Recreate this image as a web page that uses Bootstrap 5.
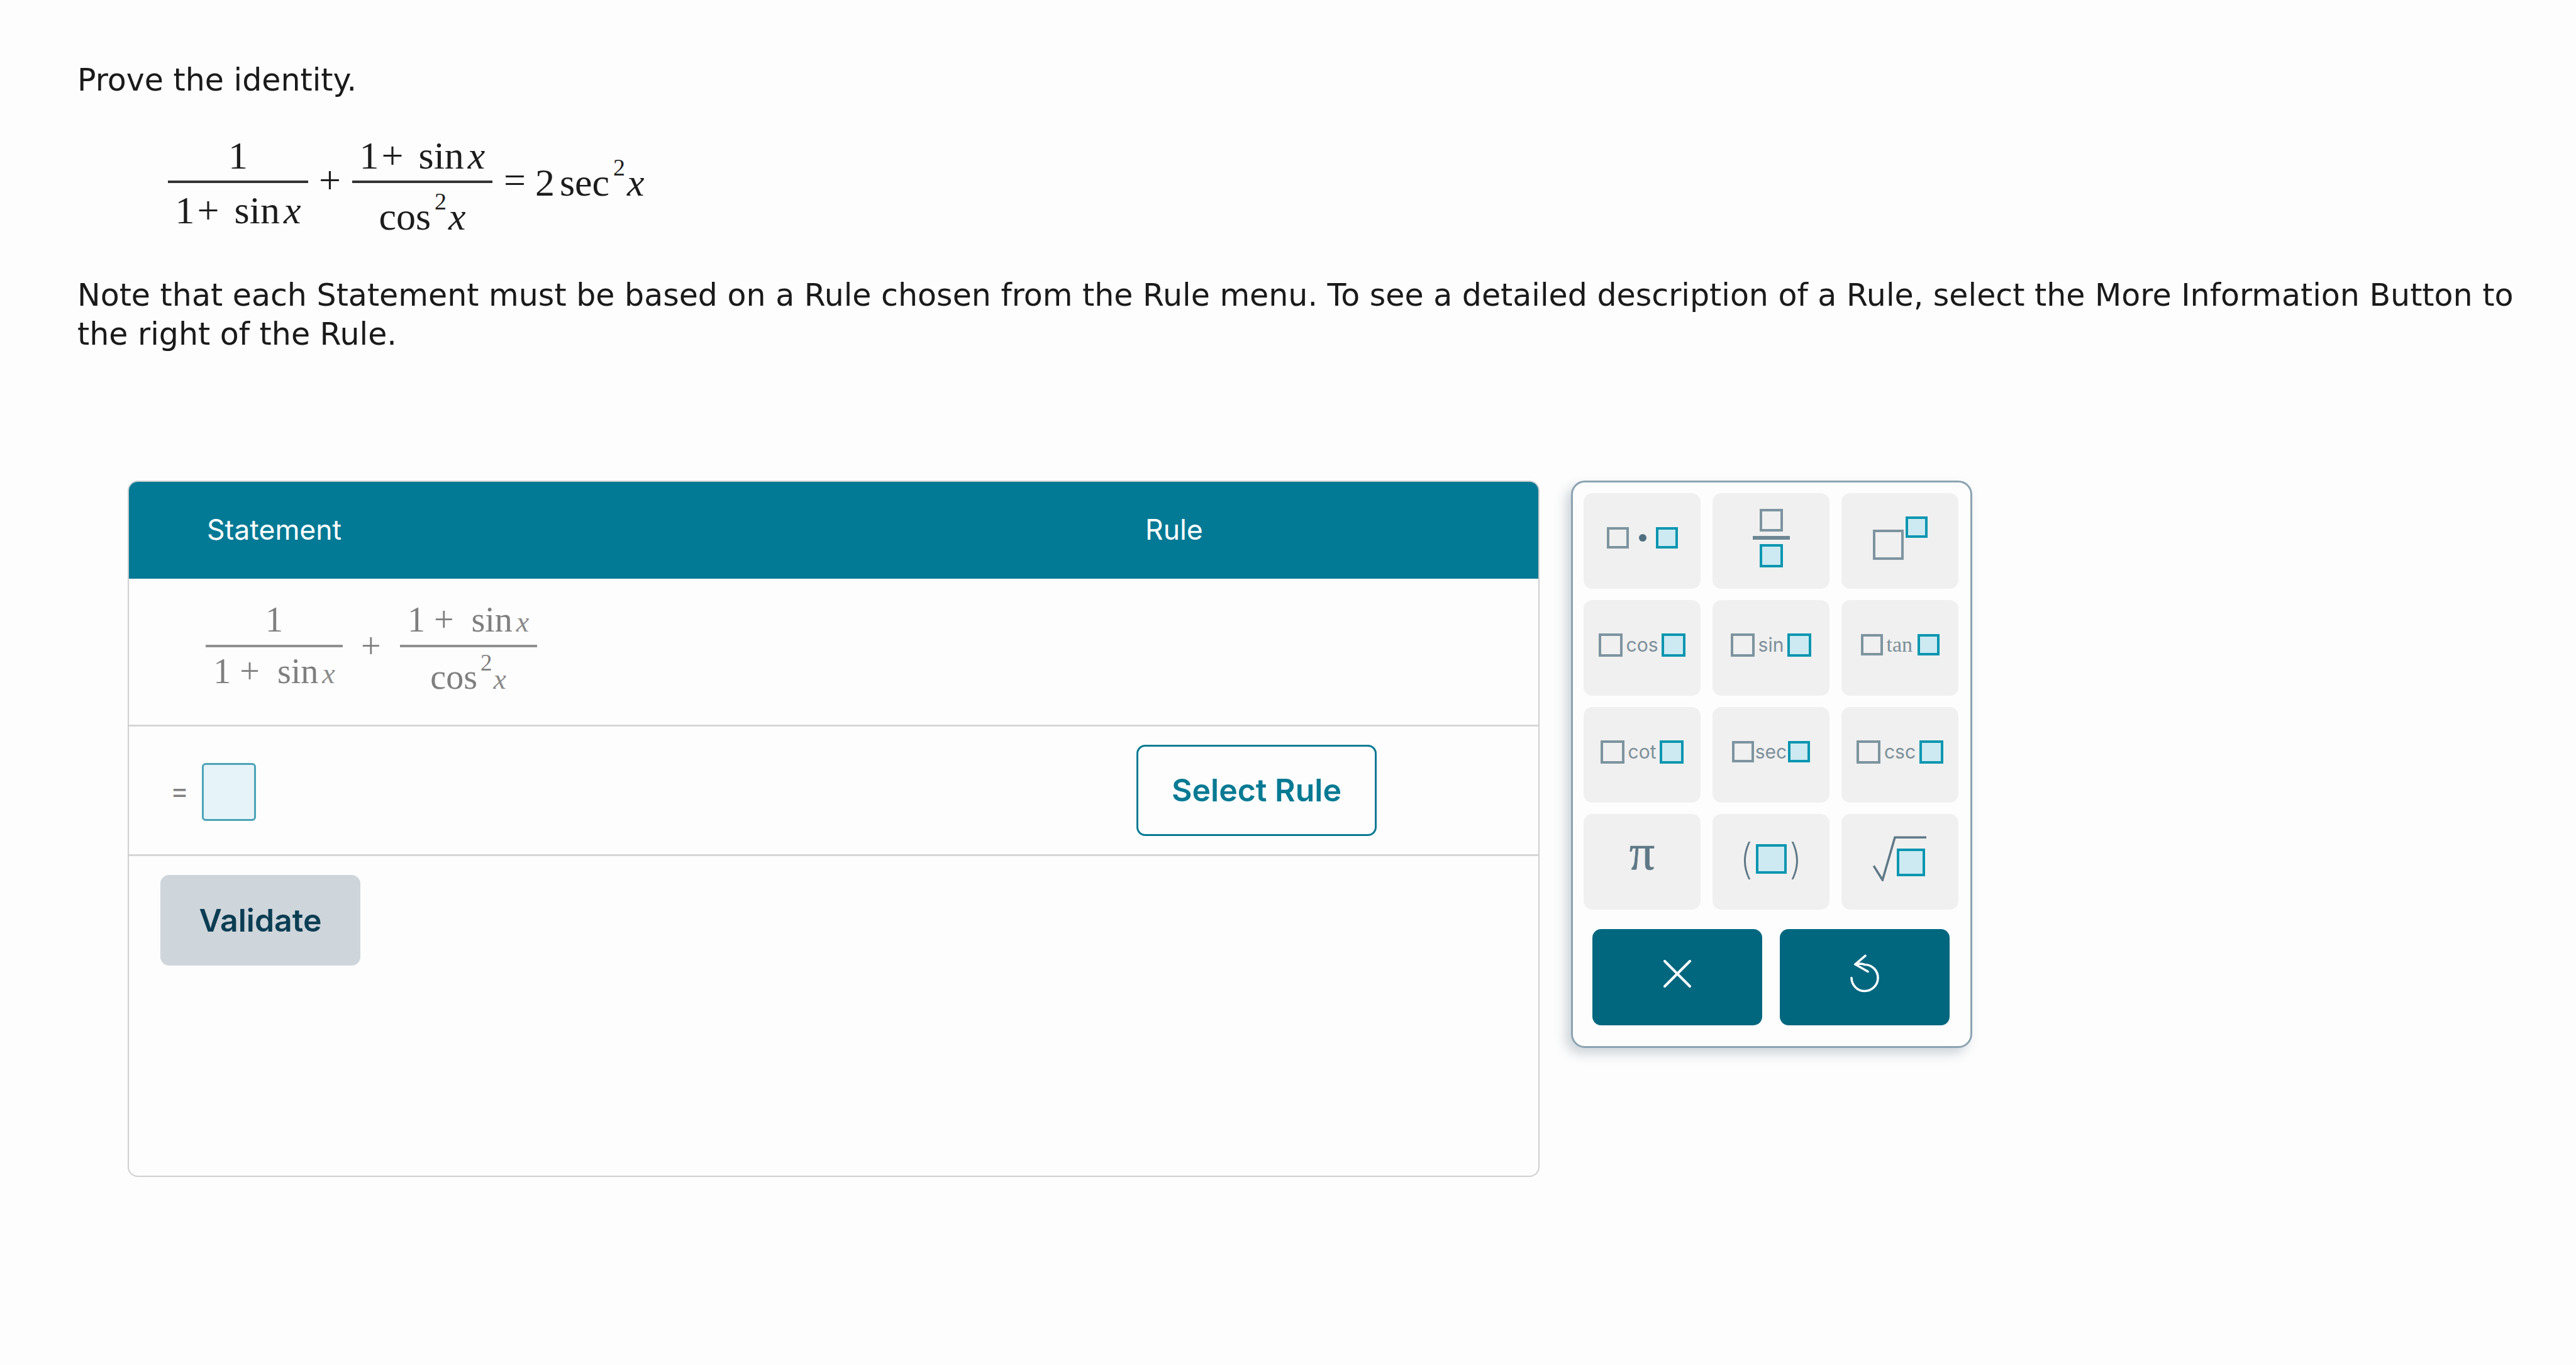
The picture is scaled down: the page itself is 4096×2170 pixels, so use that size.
<!DOCTYPE html>
<html lang="en">
<head>
<meta charset="utf-8">
<title>Prove the identity</title>
<link href="https://cdn.jsdelivr.net/npm/bootstrap@5.3.0/dist/css/bootstrap.min.css" rel="stylesheet">
<style>
html,body{background:#fdfdfd;margin:0;height:100%}
body{font-family:"Inter","Liberation Sans",sans-serif;color:#212121;overflow:hidden}
.page-wrap{padding:96px 0 0 123px}
.prompt{font-family:"DejaVu Sans",sans-serif;font-size:49.03px;line-height:62.7px;color:#1a1a1a;margin:0;max-width:3900px}
.eq{font-family:"Liberation Serif",serif;font-size:62px;line-height:70px;color:#1c1c1c;margin:53px 0 0 144px;height:226px}
.frac-a{width:223px}
.num-a{height:75px;text-align:center}
.bar-a{height:4px;background:#333}
.den-a{padding-top:8px;text-align:center}
.den-a.tall{padding-top:18px}
.op-a{margin-top:39px}
.plus-a{margin-left:17px;margin-right:18px}
.eq-a{margin-left:18px}
.rhs{margin-top:43px;margin-left:15px}
.up{font-size:38px;line-height:0;vertical-align:baseline;position:relative;top:-32px;margin:0 3px 0 6px}
.sp1{margin-left:4px}
.sp2{margin-left:24px}
.sp3{margin-left:6px}
.ital{font-style:italic}
.work{padding-left:203px;margin-top:201px;gap:50px;align-items:flex-start}
.proof{width:2245px;height:1107px;border:2px solid #cfcfcf;border-radius:16px;background:#fdfdfd;overflow:hidden;flex:none}
.proof-head{height:156px;background:#037a95;color:#fff;font-size:44.5px;font-weight:400;margin:-2px -2px 0}
.col-stmt{width:1602px;flex:none}
.col-rule{flex:1}
.head-stmt{padding-left:126px}
.head-rule{padding-left:16px}
.line1{height:235px;border-bottom:3px solid #d6d6d6;padding:35px 0 0 122px;font-family:"Liberation Serif",serif;font-size:56px;line-height:60px;color:#7f7f7f}
.frac-b{width:218px}
.num-b{height:70px;text-align:center}
.bar-b{height:3.5px;background:#8f8f8f}
.den-b{padding-top:8px;text-align:center}
.den-b.tall{padding-top:17px}
.op-b{margin:42px 30px 0 29px}
.up-b{font-size:37px;line-height:0;position:relative;top:-29px;vertical-align:baseline;margin:0 2px 0 5px}
.x-b{font-size:46px;font-style:italic;color:#8a8a8a;margin-left:6px}
.x-c{margin-left:0}
.gap-b1{margin-left:14px}
.gap-b2{margin-left:28px}
.line2{height:206px;border-bottom:3px solid #d6d6d6}
.eqsign{font-size:44px;color:#808080;margin:0 21px 0 66px;line-height:1}
.answer{width:86px;height:92px;border:3.5px solid #4ba3b6;border-radius:6px;background:#e6f3f8;margin-top:4px}
.btn.pick{width:382px;height:145px;border:3px solid #067a93;border-radius:14px;color:#067a93;background:#fdfdfd;font-size:50px;font-weight:600;padding:0}
.btn.check{width:318px;height:144px;border:0;border-radius:14px;background:#ced5db;color:#0b3d53;font-size:50px;font-weight:600;padding:0;margin:30px 0 0 50px}
.pad-panel{width:638px;height:902px;border:3px solid #8ba3b1;border-radius:22px;background:#fdfdfd;box-shadow:-8px 9px 18px rgba(95,120,140,.3);padding:17px;flex:none}
.keys{display:grid;grid-template-columns:repeat(3,186px);grid-auto-rows:152px;gap:18px 19px}
.key{background:#f0f0f0;border-radius:14px;padding-bottom:10px;color:#7d8f99;font-size:30px;line-height:1}
.bg{display:block;width:38px;height:37px;border:4px solid #7d949f;flex:none}
.bb{display:block;width:38px;height:37px;border:4px solid #0a96b0;background:#cde9f1;flex:none}
.sm{width:35px;height:34px}
.lg{width:49px;height:48px}
.tl{width:37px;height:36.5px}
.pw{width:49px;height:47px}
.gap-t{gap:6px}
.gap-n{gap:2px}
.dot{display:block;width:12px;height:12px;border-radius:50%;background:#4f7080;margin:0 15px 0 16px}
.fbar{display:block;width:59px;height:6px;background:#6e8794;margin:7px 0}
.sup-grey{margin-top:21px;margin-right:3px}
.top-key{padding-top:37px}
.tan-txt{font-family:"Liberation Serif",serif;font-size:34px;width:37px;text-align:center;margin:0 12px 0 6px}
.key.pi-key{padding-bottom:30px}
.pi{font-family:"Liberation Serif",serif;font-size:80px;color:#5f7886;line-height:1;-webkit-text-stroke:.7px #5f7886}
.paren{font-family:"Inter",sans-serif;font-weight:200;font-size:66px;color:#5f7886;line-height:1}
.act-row{gap:28px;margin:31px 0 0 14px}
.btn.act{width:270px;height:153px;background:#00677f;border:0;border-radius:14px;padding:0 0 12px}
.undo-ic{width:52px;height:62px}
.x-ic{width:44px;height:44px}
.root-ic{width:86px;height:72px}
</style>
</head>
<body>
<div class="page-wrap">
  <p class="prompt">Prove the identity.</p>
  <div class="eq d-flex align-items-start">
    <div class="frac-a">
      <div class="num-a">1</div>
      <div class="bar-a"></div>
      <div class="den-a">1<span class="sp1">+</span><span class="sp2">sin</span><span class="sp3 ital">x</span></div>
    </div>
    <div class="op-a plus-a">+</div>
    <div class="frac-a">
      <div class="num-a">1<span class="sp1">+</span><span class="sp2">sin</span><span class="sp3 ital">x</span></div>
      <div class="bar-a"></div>
      <div class="den-a tall">cos<sup class="up">2</sup><span class="ital">x</span></div>
    </div>
    <div class="op-a eq-a">=</div>
    <div class="rhs">2<span class="ms-2">sec</span><sup class="up">2</sup><span class="ital">x</span></div>
  </div>
  <p class="prompt">Note that each Statement must be based on a Rule chosen from the Rule menu. To see a detailed description of a Rule, select the More Information Button to the right of the Rule.</p>
</div>

<div class="d-flex work">
  <div class="proof">
    <div class="proof-head d-flex align-items-center">
      <div class="col-stmt head-stmt">Statement</div>
      <div class="col-rule head-rule">Rule</div>
    </div>
    <div class="line1 d-flex align-items-start">
      <div class="frac-b">
        <div class="num-b">1</div>
        <div class="bar-b"></div>
        <div class="den-b">1<span class="gap-b1">+</span><span class="gap-b2">sin</span><span class="x-b">x</span></div>
      </div>
      <div class="op-b">+</div>
      <div class="frac-b">
        <div class="num-b">1<span class="gap-b1">+</span><span class="gap-b2">sin</span><span class="x-b">x</span></div>
        <div class="bar-b"></div>
        <div class="den-b tall">cos<sup class="up-b">2</sup><span class="x-b x-c">x</span></div>
      </div>
    </div>
    <div class="line2 d-flex align-items-center">
      <div class="col-stmt d-flex align-items-center">
        <span class="eqsign">=</span>
        <span class="answer"></span>
      </div>
      <div class="col-rule">
        <button type="button" class="btn pick">Select Rule</button>
      </div>
    </div>
    <button type="button" class="btn check">Validate</button>
  </div>

  <div class="pad-panel">
    <div class="keys">
      <div class="key d-flex align-items-center justify-content-center"><span class="bg sm"></span><span class="dot"></span><span class="bb sm"></span></div>
      <div class="key d-flex flex-column align-items-center justify-content-center"><span class="bg tl"></span><span class="fbar"></span><span class="bb tl"></span></div>
      <div class="key top-key d-flex align-items-start justify-content-center"><span class="bg lg sup-grey"></span><span class="bb sm"></span></div>
      <div class="key d-flex align-items-center justify-content-center gap-t"><span class="bg"></span><span>cos</span><span class="bb"></span></div>
      <div class="key d-flex align-items-center justify-content-center gap-t"><span class="bg"></span><span>sin</span><span class="bb"></span></div>
      <div class="key d-flex align-items-center justify-content-center"><span class="bg sm"></span><span class="tan-txt">tan</span><span class="bb sm"></span></div>
      <div class="key d-flex align-items-center justify-content-center gap-t"><span class="bg"></span><span>cot</span><span class="bb"></span></div>
      <div class="key d-flex align-items-center justify-content-center gap-n"><span class="bg sm"></span><span>sec</span><span class="bb sm"></span></div>
      <div class="key d-flex align-items-center justify-content-center gap-t"><span class="bg"></span><span>csc</span><span class="bb"></span></div>
      <div class="key pi-key d-flex align-items-center justify-content-center"><span class="pi">π</span></div>
      <div class="key d-flex align-items-center justify-content-center"><span class="paren">(</span><span class="bb pw mx-1"></span><span class="paren">)</span></div>
      <div class="key d-flex align-items-center justify-content-center">
        <svg class="root-ic" viewBox="0 0 86 72" fill="none">
          <path d="M1.3 47.5 L15.3 70 L35 2.2 H85" stroke="#5f7886" stroke-width="3.5"/>
          <rect x="40" y="22" width="41" height="40" fill="#cde9f1" stroke="#0a96b0" stroke-width="4"/>
        </svg>
      </div>
    </div>
    <div class="d-flex act-row">
      <button type="button" class="btn act d-flex align-items-center justify-content-center" aria-label="Clear">
        <svg class="x-ic" viewBox="0 0 44 44" fill="none" stroke="#fff" stroke-width="4" stroke-linecap="round"><path d="M2 2 L42 42 M42 2 L2 42"/></svg>
      </button>
      <button type="button" class="btn act d-flex align-items-center justify-content-center" aria-label="Undo">
        <svg class="undo-ic" viewBox="0 0 52 62" fill="none" stroke="#fff" stroke-width="3.6" stroke-linecap="round" stroke-linejoin="round"><path d="M27 2.3 L11 16 L31 27.5"/><path d="M11 16 Q20 14 26 16.5 A21 21 0 1 1 5 37.6"/></svg>
      </button>
    </div>
  </div>
</div>
<script src="https://cdn.jsdelivr.net/npm/bootstrap@5.3.0/dist/js/bootstrap.bundle.min.js"></script>
</body>
</html>
